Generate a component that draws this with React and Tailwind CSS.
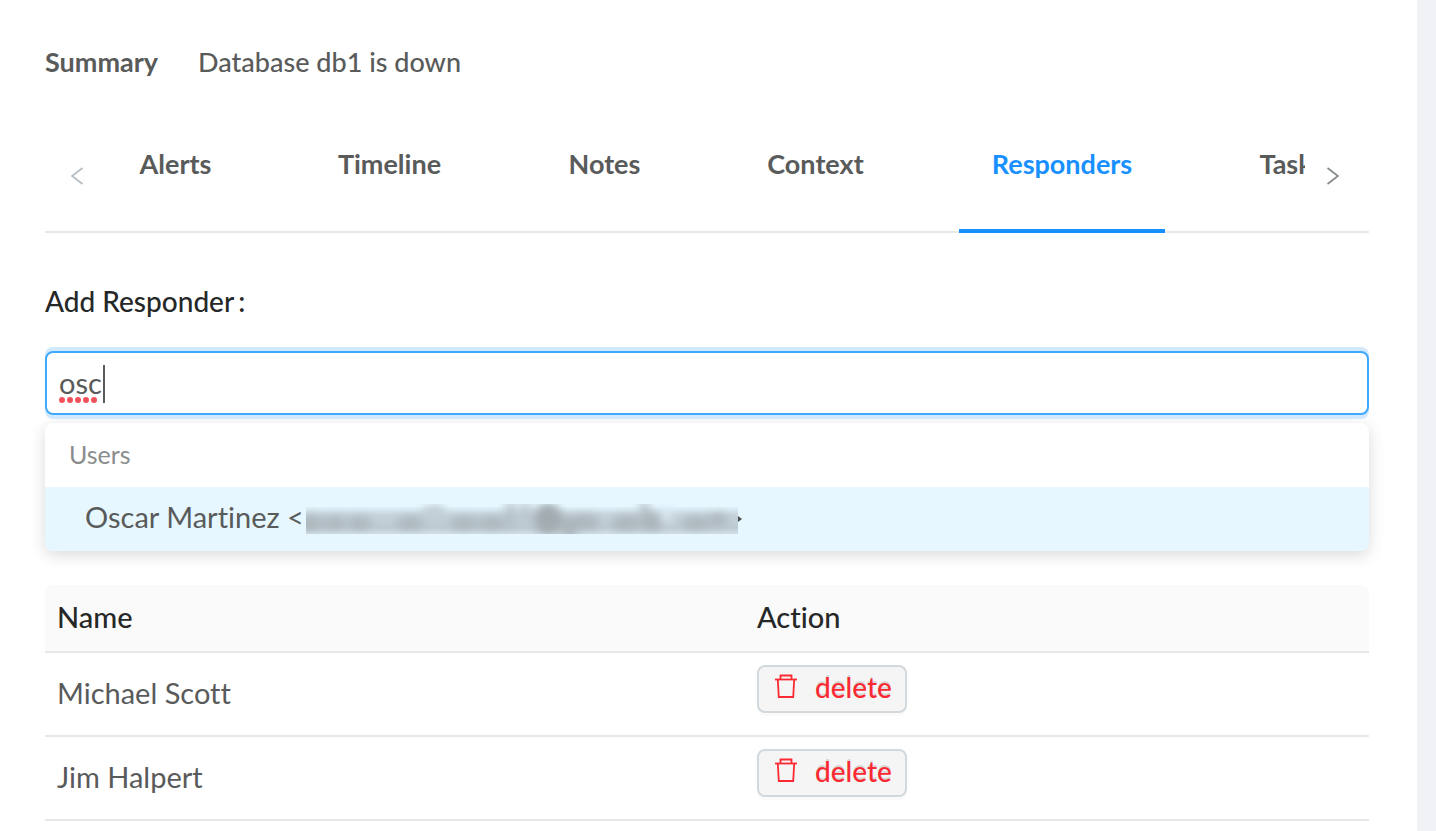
import React, { useState } from 'react';

const tabs = [
  { key: 'alerts', label: 'Alerts', width: 'w-[133px]' },
  { key: 'timeline', label: 'Timeline', width: 'w-[167px]' },
  { key: 'notes', label: 'Notes', width: 'w-[135px]' },
  { key: 'context', label: 'Context', width: 'w-[159px]' },
  { key: 'responders', label: 'Responders', width: 'w-[206px]' },
  { key: 'tasks', label: 'Tasks', width: 'w-[126px]' },
];

const Chevron = ({ flip }) => (
  <svg viewBox="0 0 12 18" className="w-3 h-[18px]" fill="none" stroke="currentColor" strokeWidth="1.7">
    <path d={flip ? 'M0.5 1L11 9L0.5 17' : 'M11.5 1L1 9L11.5 17'} />
  </svg>
);

const TrashIcon = () => (
  <svg viewBox="0 0 22 24" className="w-[22px] h-6 mb-0.5" fill="none" stroke="currentColor" strokeWidth="1.8">
    <path d="M0 5.5H22" />
    <path d="M5.5 5.5V1.5H16.5V5.5" />
    <path d="M2.8 5.5L3.8 23H18.2L19.2 5.5" />
  </svg>
);

// Blurred-out address next to the user's name
const HiddenAddress = () => (
  <svg viewBox="0 0 432 30" className="w-[432px] h-[30px]" aria-hidden="true">
    <defs>
      <filter id="smudge" x="-5%" y="-50%" width="110%" height="200%">
        <feGaussianBlur stdDeviation="5" />
      </filter>
      <linearGradient id="haze" x1="0" y1="0" x2="0" y2="1">
        <stop offset="0" stopColor="#e2f2fb" />
        <stop offset="0.3" stopColor="#c6d3db" />
        <stop offset="0.75" stopColor="#bccad2" />
        <stop offset="1" stopColor="#d3dfe8" />
      </linearGradient>
    </defs>
    <rect y="3" width="432" height="27" fill="url(#haze)" />
    <g filter="url(#smudge)" fill="#aab5bb">
      <ellipse cx="4" cy="19" rx="12" ry="7" />
      <ellipse cx="28" cy="19" rx="12" ry="6" />
      <ellipse cx="54" cy="19" rx="12" ry="6" />
      <ellipse cx="104" cy="19" rx="14" ry="6" />
      <ellipse cx="128" cy="8" rx="12" ry="7" fill="#c0cdd5" />
      <ellipse cx="158" cy="19" rx="14" ry="6" />
      <ellipse cx="186" cy="19" rx="14" ry="6" />
      <rect x="200" y="-2" width="9" height="26" fill="#b4c0c7" />
      <rect x="215" y="-2" width="9" height="22" fill="#b8c5cc" />
      <ellipse cx="242" cy="15" rx="14" ry="16" fill="#a2abb0" />
      <rect x="256" y="13" width="14" height="22" />
      <ellipse cx="278" cy="18" rx="16" ry="7" />
      <ellipse cx="320" cy="19" rx="14" ry="7" />
      <rect x="334" y="-2" width="9" height="24" fill="#b4c0c7" />
      <ellipse cx="346" cy="18" rx="12" ry="9" />
      <ellipse cx="360" cy="10" rx="5" ry="10" fill="#dcebf4" />
      <ellipse cx="390" cy="19" rx="14" ry="6" />
      <ellipse cx="412" cy="16" rx="10" ry="6" />
    </g>
  </svg>
);

const App = () => {
  const [active, setActive] = useState('responders');
  const [query, setQuery] = useState('osc');
  const [responders, setResponders] = useState(['Michael Scott', 'Jim Halpert']);

  return (
    <div className="min-h-screen bg-[#f0f2f5] pr-[19px] flex font-['Lato','Liberation_Sans',sans-serif] [font-variant-ligatures:none] text-[29px] leading-9 text-[#595b5b]">
      <main className="flex-1 min-w-0 bg-white pl-[45px] pr-12 pt-11">
        {/* Summary */}
        <div className="flex gap-10 text-[27px] font-medium">
          <span className="font-bold">Summary</span>
          <span>Database db1 is down</span>
        </div>

        {/* Tabs */}
        <div className="mt-8 h-[121px] flex border-b-2 border-[#e8e8e8]">
          <button type="button" aria-label="Previous tabs" className="w-16 h-32 shrink-0 flex items-center justify-center text-[#b3bcc1]">
            <Chevron />
          </button>
          <div role="tablist" className="flex-1 min-w-0 h-[121px] flex gap-16 overflow-hidden text-[27px]">
            {tabs.map((tab) => (
              <button
                key={tab.key}
                type="button"
                role="tab"
                aria-selected={active === tab.key}
                onClick={() => setActive(tab.key)}
                className={`${tab.width} shrink-0 pb-3.5 text-center font-bold border-b-4 ${active === tab.key ? 'text-[#1890ff] border-[#1890ff]' : 'border-transparent'}`}
              >
                {tab.label}
              </button>
            ))}
          </div>
          <button type="button" aria-label="Next tabs" className="w-16 h-32 pr-2 shrink-0 flex items-center justify-center text-[#85898b]">
            <Chevron flip />
          </button>
        </div>

        {/* Add responder */}
        <label htmlFor="responder" className="block mt-[50px] text-[28px] font-medium text-[#262828]">
          Add Responder<span className="ml-1">:</span>
        </label>
        <div className="relative mt-8">
          <input
            id="responder"
            type="text"
            autoComplete="off"
            spellCheck={false}
            value={query}
            onChange={(e) => setQuery(e.target.value)}
            className="block w-full h-16 px-3 pb-0.5 bg-white border-2 border-[#40a9ff] rounded-lg outline-none shadow-[0_-4px_0_#d1e9ff,0_4px_0_#d1e9ff]"
          />
          {query === 'osc' && (
            <>
              <svg viewBox="0 0 40 6" className="absolute left-3.5 top-[46px] w-10 h-1.5 fill-[#f5515c]" aria-hidden="true">
                {[3, 11, 19, 27, 35].map((cx) => <circle key={cx} cx={cx} cy="3" r="3" />)}
              </svg>
              <span className="absolute left-[58px] top-3.5 w-0.5 h-[38px] bg-[#595b5b]"></span>
            </>
          )}
        </div>

        <div className="mt-2 rounded-lg bg-white overflow-hidden shadow-[0_4px_16px_rgba(0,0,0,0.15)]">
          <div className="h-16 px-6 pb-0.5 flex items-center text-[25px] text-[#8b8d8d]">Users</div>
          <button type="button" className="w-full h-16 pl-10 pr-6 flex items-center bg-[#e6f7ff]">
            <span className="pb-1">Oscar Martinez &lt;</span>
            <span className="ml-0.5"><HiddenAddress /></span>
            <svg viewBox="0 0 4 6" className="w-1 h-1.5 fill-[#4b4d4d]" aria-hidden="true"><path d="M0 0L4 3L0 6Z" /></svg>
          </button>
        </div>

        {/* Responders table */}
        <table className="mt-[34px] w-full table-fixed border-separate border-spacing-0 text-left">
          <thead>
            <tr className="h-[68px] text-[#262828]">
              <th className="w-[700px] px-3 pb-0.5 font-medium bg-[#fafafa] border-b-2 border-[#e8e8e8] rounded-tl-lg">Name</th>
              <th className="px-3 pb-0.5 font-medium bg-[#fafafa] border-b-2 border-[#e8e8e8] rounded-tr-lg">Action</th>
            </tr>
          </thead>
          <tbody>
            {responders.map((name) => (
              <tr key={name} className="h-[84px]">
                <td className="px-3 pb-0.5 border-b-2 border-[#e8e8e8]">{name}</td>
                <td className="px-3 pt-3 align-top border-b-2 border-[#e8e8e8]">
                  <button
                    type="button"
                    onClick={() => setResponders(responders.filter((r) => r !== name))}
                    className="w-[150px] h-12 pl-4 pb-1 flex items-center gap-[18px] bg-[#f5f5f5] border-2 border-[#d2d8db] rounded-lg text-[28px] font-medium leading-8 text-[#fb2a32] shadow-[0_3px_0_rgba(0,0,0,0.02)] text-shadow-[0_-2px_0_rgba(0,0,0,0.12)]"
                  >
                    <TrashIcon />
                    delete
                  </button>
                </td>
              </tr>
            ))}
          </tbody>
        </table>
      </main>
    </div>
  );
};

export default App;
